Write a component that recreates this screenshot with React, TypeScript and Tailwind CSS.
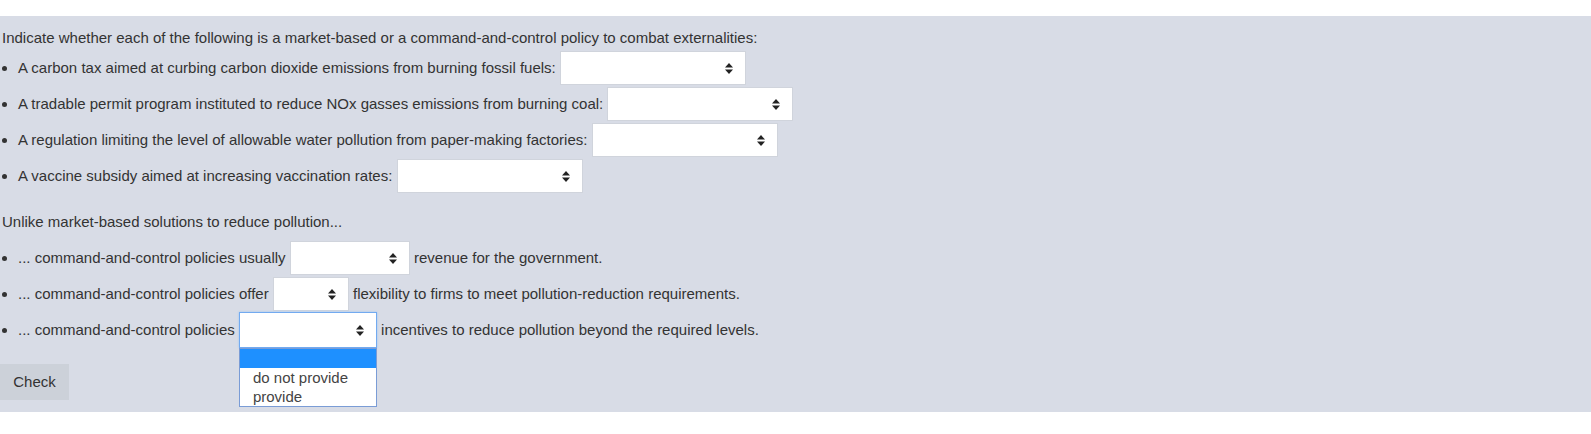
import React from "react";

const Arrows = () => (
  <svg width="8" height="11" viewBox="0 0 8 11" className="shrink-0">
    <polygon points="4,0 8,4.5 0,4.5" fill="#222" />
    <polygon points="0,6.5 8,6.5 4,11" fill="#222" />
  </svg>
);

function Sel({ w, focus = false }: { w: number; focus?: boolean }) {
  return (
    <span
      className={
        "inline-flex shrink-0 items-center justify-end bg-white pr-[12px] align-middle " +
        (focus ? "border border-[#72aaf0] shadow-[0_0_2px_#9cc6f5] h-[36px]" : "border border-[#d0d4dc] h-[34px]")
      }
      style={{ width: w }}
    >
      <Arrows />
    </span>
  );
}

const Bullet = () => (
  <span className="w-[16px] flex justify-start pt-[1px]">
    <span className="block w-[5px] h-[5px] rounded-full bg-[#333]" />
  </span>
);

export default function App() {
  return (
    <div
      className="w-[1591px] h-[434px] bg-white text-[15px] text-[#333]"
      style={{ fontFamily: '"Liberation Sans", Arial, sans-serif' }}
    >
      <div className="h-[16px]" />
      <div className="relative bg-[#d8dce6] pt-[12px] pb-[12px] pl-[2px]">
        <p className="leading-[20px] h-[20px]">
          Indicate whether each of the following is a market-based or a command-and-control policy to combat externalities:
        </p>
        <ul className="mt-[2px]">
          {[
            "A carbon tax aimed at curbing carbon dioxide emissions from burning fossil fuels:",
            "A tradable permit program instituted to reduce NOx gasses emissions from burning coal:",
            "A regulation limiting the level of allowable water pollution from paper-making factories:",
            "A vaccine subsidy aimed at increasing vaccination rates:",
          ].map((t, i) => (
            <li key={i} className="flex h-[36px] items-center">
              <Bullet />
              <span className="whitespace-pre">{t} </span>
              <Sel w={186} />
            </li>
          ))}
        </ul>
        <p className="leading-[20px] h-[20px] mt-[18px]">Unlike market-based solutions to reduce pollution...</p>
        <ul className="mt-[8px]">
          <li className="flex h-[36px] items-center">
            <Bullet />
            <span className="whitespace-pre">... command-and-control policies usually </span>
            <Sel w={120} />
            <span className="whitespace-pre"> revenue for the government.</span>
          </li>
          <li className="flex h-[36px] items-center">
            <Bullet />
            <span className="whitespace-pre">... command-and-control policies offer </span>
            <Sel w={76} />
            <span className="whitespace-pre"> flexibility to firms to meet pollution-reduction requirements.</span>
          </li>
          <li className="flex h-[36px] items-center">
            <Bullet />
            <span className="whitespace-pre">... command-and-control policies </span>
            <span className="relative inline-flex">
              <Sel w={138} focus />
              <div className="absolute left-0 top-[36px] w-[138px] border border-[#7a9cd6] bg-white z-10">
                <div className="h-[19px] bg-[#1e90ff]" />
                <div className="h-[19px] leading-[19px] pl-[13px] text-[#444]">do not provide</div>
                <div className="h-[19px] leading-[19px] pl-[13px] text-[#444]">provide</div>
              </div>
            </span>
            <span className="whitespace-pre"> incentives to reduce pollution beyond the required levels.</span>
          </li>
        </ul>
        <button className="mt-[16px] ml-[-2px] h-[36px] w-[69px] bg-[#ccd1d9] text-[#333] text-[15px]">
          Check
        </button>
      </div>
    </div>
  );
}
